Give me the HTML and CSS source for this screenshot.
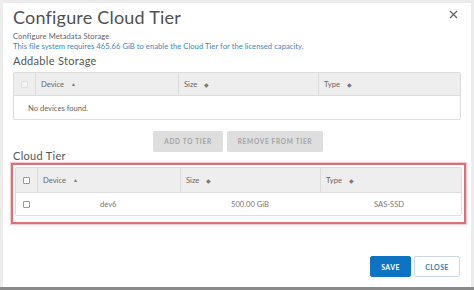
FILE: index.html
```html
<!DOCTYPE html>
<html>
<head>
<meta charset="utf-8">
<link rel="stylesheet" href="styles.css">
</head>
<body>
<div class="modal">
  <div class="header">
    <h1 class="title">Configure Cloud Tier</h1>
    <svg class="close-x" width="9" height="9" viewBox="0 0 9 9"><path d="M1 1L8 8M8 1L1 8" stroke="#666" stroke-width="1.3"/></svg>
  </div>
  <div class="sub">Configure Metadata Storage</div>
  <div class="info">This file system requires 465.66 GiB to enable the Cloud Tier for the licensed capacity.</div>
  <div class="section">Addable Storage</div>
  <div class="grid grid1">
    <div class="row head">
      <div class="cell chk"><span class="box dim"></span></div>
      <div class="cell c-dev">Device <span class="arrow">▲</span></div>
      <div class="cell c-size">Size <span class="diamond">◆</span></div>
      <div class="cell c-type">Type <span class="diamond">◆</span></div>
    </div>
    <div class="row body empty">No devices found.</div>
  </div>
  <div class="actions">
    <button class="btn-dis">ADD TO TIER</button>
    <button class="btn-dis">REMOVE FROM TIER</button>
  </div>
  <div class="section sec2">Cloud Tier</div>
  <div class="highlight">
    <div class="grid grid2">
      <div class="row head">
        <div class="cell chk"><span class="box"></span></div>
        <div class="cell c-dev">Device <span class="arrow">▲</span></div>
        <div class="cell c-size">Size <span class="diamond">◆</span></div>
        <div class="cell c-type">Type <span class="diamond">◆</span></div>
      </div>
      <div class="row body">
        <div class="cell chk"><span class="box"></span></div>
        <div class="cell c-dev v-dev">dev6</div>
        <div class="cell c-size v-size">500.00 GiB</div>
        <div class="cell c-type v-type">SAS-SSD</div>
      </div>
    </div>
  </div>
  <div class="footer">
    <button class="btn-save">SAVE</button>
    <button class="btn-close">CLOSE</button>
  </div>
</div>
<div class="bottom-bar"></div>
</body>
</html>
```
FILE: styles.css
```css
* { box-sizing: border-box; }
html, body { margin: 0; padding: 0; }
body {
  width: 474px;
  height: 290px;
  background: #ececec;
  font-family: "Lato", "Open Sans", sans-serif;
  color: #565656;
  overflow: hidden;
  position: relative;
}
.modal {
  position: absolute;
  left: 3px;
  top: 3px;
  width: 468px;
  height: 284px;
  background: #fff;
  padding: 0 10px 0 10px;
  display: flex;
  flex-direction: column;
}
.header {
  display: flex;
  justify-content: space-between;
  align-items: center;
  height: 27px;
  padding-top: 0px;
}
.title {
  margin: 0;
  font-weight: 400;
  font-size: 18px;
  color: #505050;
  letter-spacing: 0.2px;
}
.close-x { margin-right: 3px; margin-top: -4px; }
.sub {
  font-size: 7.6px;
  margin-top: 1px;
  line-height: 10px;
  color: #666;
  letter-spacing: 0.1px;
}
.info {
  font-size: 7.6px;
  line-height: 10px;
  color: #3b86c9;
  letter-spacing: 0.05px;
}
.section {
  font-size: 11px;
  line-height: 14px;
  margin-top: 3px;
  color: #555;
  letter-spacing: 0.3px;
}
.grid {
  border: 1px solid #dcdcdc;
  border-radius: 2px;
  width: 448px;
}
.grid1 { margin-top: 4px; }
.row { display: flex; font-size: 7.6px; }
.row.head {
  background: #eeeeee;
  height: 23px;
  border-bottom: 1px solid #dcdcdc;
  color: #666;
}
.row.body { height: 23px; background: #fff; }
.cell {
  display: flex;
  align-items: center;
  padding-left: 5px;
}
.head .cell + .cell { border-left: 1px solid #dcdcdc; }
.chk { width: 21px; justify-content: center; padding-left: 0; }
.c-dev { width: 143px; }
.c-size { width: 140px; }
.c-type { flex: 1; }
.arrow { font-size: 5px; margin-left: 7px; color: #777; }
.diamond { font-size: 6px; margin-left: 7px; color: #777; }
.box {
  width: 7px; height: 7px;
  border: 1px solid #999;
  border-radius: 1px;
  background: #fff;
}
.box.dim { border-color: #ddd; background: #f4f4f4; }
.empty {
  align-items: center;
  padding-left: 14px;
  color: #666;
}
.actions {
  display: flex;
  justify-content: center;
  gap: 4px;
  margin-top: 11px;
  padding-left: 2px;
}
.actions button {
  font-family: inherit;
  height: 21px;
  border: none;
  border-radius: 2px;
  background: #dedede;
  color: #a3a3a3;
  font-size: 6.5px;
  font-weight: 700;
  letter-spacing: 0.7px;
  padding: 0 6px;
}
.actions button:first-child { width: 70px; }
.actions button:last-child { width: 96px; }
.sec2 { margin-top: -3px; }
.highlight {
  margin-left: -2px;
  margin-top: 0px;
  width: 455px;
  border: 2px solid #dc7077;
  box-shadow: 0 0 1px 1px rgba(220,112,119,0.35);
  padding: 2px 3px 6px 2px;
}
.grid2 { width: 447px; }
.grid2 .row.head { height: 25px; }
.grid2 .row.body { height: 22px; color: #777; }
.v-dev { padding-left: 63px; }
.v-size { padding-left: 51px; }
.v-type { padding-left: 54px; }
.footer {
  display: flex;
  justify-content: flex-end;
  gap: 3px;
  margin-top: 32px;
  padding-right: 1px;
}
.footer button {
  font-family: inherit;
  height: 21px;
  font-size: 7px;
  font-weight: 700;
  letter-spacing: 0.4px;
  border-radius: 2px;
}
.btn-save {
  width: 41px;
  background: #0f73c4;
  color: #fff;
  border: 1px solid #0f73c4;
}
.btn-close {
  width: 46px;
  background: #fff;
  color: #2f7bbf;
  border: 1px solid #c9d7e6;
}
.bottom-bar {
  position: absolute;
  left: 0;
  bottom: 0;
  width: 474px;
  height: 3px;
  background: #8a8a8a;
}
```
